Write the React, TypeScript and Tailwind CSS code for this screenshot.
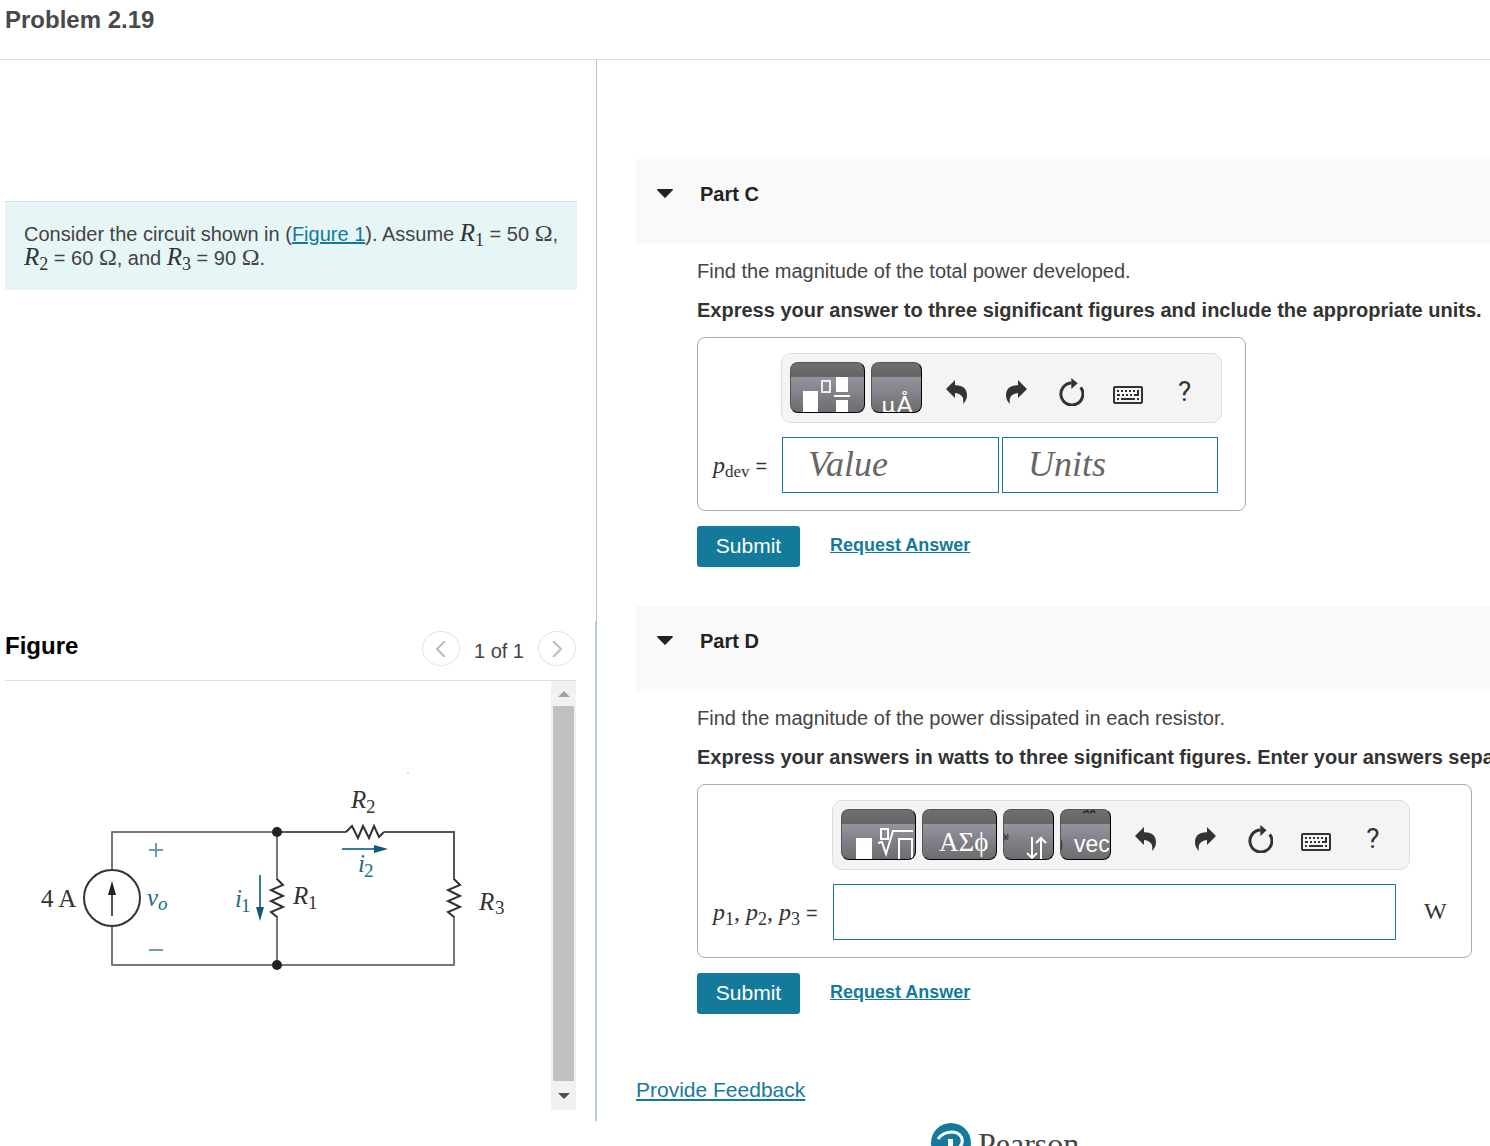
import type { ReactNode } from 'react';

const serif = "font-['Liberation_Serif',serif]";

function MathVar({ name, sub }: { name: string; sub: string }) {
  return (
    <span className={`${serif} text-[25px] leading-[0] text-[#333]`}>
      <i>{name}</i>
      <sub className="text-lg leading-[0]">{sub}</sub>
    </span>
  );
}

function Omega() {
  return <span className={`${serif} text-2xl leading-[0]`}>Ω</span>;
}

function UndoIcon({ flip = false }: { flip?: boolean }) {
  return (
    <svg width="24" height="24" viewBox="0 0 72 72" className={flip ? '-scale-x-100' : ''} fill="#333">
      <path d="M0 27L27 0V16C49 15 63 26 63 46C63 56 59 65 51 72C54 58 52 42 27 39V54Z" />
    </svg>
  );
}

function ResetIcon() {
  return (
    <svg width="25" height="28" viewBox="0 0 75 84" fill="none">
      <path d="M38 15A33 33 0 1 0 65 28" stroke="#333" strokeWidth="9" />
      <path d="M37 0L56 16L37 33Z" fill="#333" />
    </svg>
  );
}

function KeyboardIcon() {
  return (
    <svg width="30" height="24" viewBox="0 0 30 24" fill="none" stroke="#333">
      <rect x="1" y="7" width="28" height="16" rx="1" strokeWidth="2" />
      <path d="M4 11H22" strokeWidth="2" strokeDasharray="2 2" />
      <path d="M4 15H7M9 15H11M13 15H15M17 15H19M21 15H26M25 10V16" strokeWidth="2" />
      <path d="M4 19H6M8 19H22M24 19H26" strokeWidth="2" />
    </svg>
  );
}

function PaletteButton({ label, wide = false, children }: { label: string; wide?: boolean; children: ReactNode }) {
  return (
    <button
      type="button"
      aria-label={label}
      className={`h-[51px] shrink-0 overflow-hidden rounded-lg border border-t-[#555] border-l-[#555] border-r-black border-b-black bg-[linear-gradient(#707070,#646464_14px,#95939d_14px,#6d6c70)] ${
        wide ? 'w-[75px]' : 'w-[51px]'
      }`}
    >
      <svg width={wide ? 73 : 49} height="49" viewBox={wide ? '1 1 73 49' : '1 1 49 49'} fill="none">
        {children}
      </svg>
    </button>
  );
}

function Toolbar({ className, children }: { className: string; children: ReactNode }) {
  const action = 'flex h-[51px] w-[57px] items-center justify-center pt-2';
  return (
    <div className={`flex h-[70px] items-start rounded-[10px] border border-[#ddd] bg-[#f4f4f4] px-2 pt-2 ${className}`}>
      <div className="mr-2 flex gap-[6px]">{children}</div>
      <button type="button" aria-label="Undo" className={action}>
        <UndoIcon />
      </button>
      <button type="button" aria-label="Redo" className={action}>
        <UndoIcon flip />
      </button>
      <button type="button" aria-label="Reset" className={action}>
        <ResetIcon />
      </button>
      <button type="button" aria-label="Keyboard shortcuts" className={action}>
        <KeyboardIcon />
      </button>
      <button type="button" aria-label="Help" className={`${action} font-[Roboto,sans-serif] text-[28px] text-[#333]`}>
        ?
      </button>
    </div>
  );
}

interface PartProps {
  title: string;
  question: string;
  instruction: string;
  children: ReactNode;
}

function Part({ title, question, instruction, children }: PartProps) {
  return (
    <section className="mb-[39px]">
      <div className="flex h-[85px] bg-[#f9f9f9] pl-[21px] pt-[23px]">
        <button type="button" className="flex h-6 items-center gap-[27px] text-xl font-bold text-[#222]">
          <svg width="16" height="10" viewBox="0 0 16 10" fill="#222">
            <path d="M1 0H15Q17 0 15 2L9 8Q8 10 7 8L1 2Q-1 0 1 0Z" />
          </svg>
          {title}
        </button>
      </div>
      <div className="pl-[61px] pt-[15px]">
        <p className="text-xl leading-6 whitespace-nowrap">{question}</p>
        <p className="mt-[15px] text-xl leading-6 font-bold whitespace-nowrap text-[#333]">{instruction}</p>
        {children}
        <div className="mt-[15px] flex items-center gap-[30px]">
          <button type="button" className="h-[41px] w-[103px] rounded-[3px] bg-[#147a9c] pb-px text-[21px] text-white">
            Submit
          </button>
          <a href="#request" className="pb-1 text-lg font-bold text-[#147a9c] underline">
            Request Answer
          </a>
        </div>
      </div>
    </section>
  );
}

function Circuit() {
  return (
    <svg viewBox="0 0 546 429" className="h-[429px] w-[546px] min-w-0" fill="none" role="img" aria-label="Circuit diagram">
      <g stroke="#777" strokeWidth="2">
        <path d="M107 189V151H272M107 245V284H449V235M272 151V199M272 235V284" strokeLinejoin="round" />
        <path d="M272 151H341M379 151H449V199" stroke="#555" />
      </g>
      <g stroke="#333" strokeWidth="2">
        <circle cx="107" cy="217" r="28" />
        <path d="M272 198L278 204L266 209L278 215L266 220L278 226L266 231L272 236" />
        <path d="M449 198L455 204L443 209L455 215L443 220L455 226L443 231L449 236" />
        <path d="M341 151L347 145L353 157L358 145L364 157L369 145L374 156L379 151" />
      </g>
      <path d="M107 235V210" stroke="#555" strokeWidth="2" />
      <path d="M107 200L111 214H103Z" fill="#222" />
      <circle cx="272" cy="151" r="5" fill="#222" />
      <circle cx="272" cy="284" r="5" fill="#222" />
      <path d="M402 92H404" stroke="#bbb" />
      <g stroke="#6b9db5" strokeWidth="2">
        <path d="M144 169H158M151 162V176M144 269H158" />
        <path d="M255 194V228M337 168H371" stroke="#3c7c9b" />
      </g>
      <path d="M255 240L251 226H259ZM383 168L369 172V164Z" fill="#0e5a7d" />
      <g fontFamily="'Liberation Serif', serif" fontSize="25" fill="#333">
        <text x="36" y="226">4 A</text>
        <g fontStyle="italic">
          <text x="346" y="127">R</text>
          <text x="288" y="223">R</text>
          <text x="474" y="229">R</text>
        </g>
        <g fontSize="19">
          <text x="361" y="132">2</text>
          <text x="303" y="228">1</text>
          <text x="490" y="233">3</text>
        </g>
      </g>
      <g fontFamily="'Liberation Serif', serif" fontSize="25" fill="#21688a">
        <g fontStyle="italic">
          <text x="142" y="225">v</text>
          <text x="153" y="229" fontSize="19">o</text>
          <text x="230" y="226">i</text>
          <text x="353" y="191">i</text>
        </g>
        <text x="236" y="231" fontSize="19">1</text>
        <text x="359" y="196" fontSize="19">2</text>
      </g>
    </svg>
  );
}

function Figure() {
  const arrow = 'flex h-[35px] w-[38px] items-center justify-center rounded-[50%] border border-[#e4e4e4]';
  return (
    <div className="h-[500px] border-r-2 border-[#b9cade] pr-[19px] pl-[5px]">
      <div className="flex h-[60px] items-start border-b border-[#ddd] pt-[10px]">
        <h2 className="mr-auto text-2xl font-bold leading-[30px] text-black">Figure</h2>
        <button type="button" aria-label="Previous figure" className={arrow}>
          <svg width="10" height="16" viewBox="0 0 10 16" fill="none" stroke="#bbb" strokeWidth="2">
            <path d="M9 0L1 8L9 16" />
          </svg>
        </button>
        <span className="px-[14px] pt-[6px] text-xl leading-7 whitespace-nowrap">1 of 1</span>
        <button type="button" aria-label="Next figure" className={arrow}>
          <svg width="10" height="16" viewBox="0 0 10 16" fill="none" stroke="#bbb" strokeWidth="2">
            <path d="M1 0L9 8L1 16" />
          </svg>
        </button>
      </div>
      <div className="flex h-[429px]">
        <div className="min-w-0 flex-1 overflow-hidden">
          <Circuit />
        </div>
        <div className="flex w-[25px] flex-col bg-[#f1f1f1]">
          <button type="button" aria-label="Scroll up" className="flex h-[25px] items-center justify-center">
            <svg width="12" height="6" viewBox="0 0 12 6" fill="#a3a3a3">
              <path d="M6 0L12 6H0Z" />
            </svg>
          </button>
          <div className="mx-[2px] flex-1 bg-[#c1c1c1]" />
          <button type="button" aria-label="Scroll down" className="flex h-[29px] items-center justify-center">
            <svg width="12" height="6" viewBox="0 0 12 6" fill="#505050">
              <path d="M6 6L12 0H0Z" />
            </svg>
          </button>
        </div>
      </div>
    </div>
  );
}

export default function App() {
  const box = 'mt-[15px] grid h-[174px] content-start gap-y-[14px] rounded-lg border border-[#aaa] pt-[15px]';
  const field = 'h-14 border border-[#147a9c] bg-white pb-[2px] px-[25px] text-4xl italic placeholder:text-[#666]';
  const label = 'col-start-1 pl-[15px] pt-3 text-2xl leading-8 whitespace-nowrap text-[#333]';
  return (
    <div className="h-screen overflow-hidden bg-white font-['Liberation_Sans',Arial,sans-serif] text-[#444]">
      <header className="h-[60px] border-b border-[#ddd] pl-[5px] pt-1">
        <h1 className="text-2xl font-bold leading-8 text-[#494949]">Problem 2.19</h1>
      </header>
      <div className="flex">
        <aside className="box-content w-2/5 shrink-0 pr-px">
          <div className="-mr-px h-[561px] border-r border-[#b3c9d6] pr-[19px] pl-[5px] pt-[141px]">
            <p className="h-[89px] border-t border-[#d3dfe0] bg-[#e6f5f6] pt-5 pl-[19px] text-xl leading-6 whitespace-nowrap">
              Consider the circuit shown in (
              <a href="#figure" className="text-[#147a9c] underline">
                Figure 1
              </a>
              ). Assume <MathVar name="R" sub="1" /> = 50 <Omega />,
              <br />
              <MathVar name="R" sub="2" /> = 60 <Omega />, and <MathVar name="R" sub="3" /> = 90 <Omega />.
            </p>
          </div>
          <div className="-mr-px">
            <Figure />
          </div>
        </aside>
        <main className="min-w-0 flex-1 pt-[99px] pl-[39px]">
          <Part
            title="Part C"
            question="Find the magnitude of the total power developed."
            instruction="Express your answer to three significant figures and include the appropriate units."
          >
            <div className={`${box} w-[549px] grid-cols-[83px_441px]`}>
              <Toolbar className="col-start-2">
                <PaletteButton label="Templates" wide>
                  <path d="M13 29H28V50H13ZM46 15H58V30H46ZM46 38H58V50H46ZM44 33H60V35H44Z" fill="white" />
                  <path d="M31 18H41V31H31ZM33 20V29H39V20Z" fill="#eee" fillRule="evenodd" />
                </PaletteButton>
                <PaletteButton label="Units">
                  <text x="10" y="51" fontFamily="Lato, sans-serif" fontSize="24" fill="white">
                    µÅ
                  </text>
                </PaletteButton>
              </Toolbar>
              <label htmlFor="pdev" className={`${serif} ${label}`}>
                <i>p</i>
                <sub className="text-[17px] leading-[0]">dev</sub>
                <span className="pl-[6px] font-['Liberation_Sans',sans-serif] text-xl leading-[0]">=</span>
              </label>
              <div className="flex gap-[3px] pl-px">
                <input id="pdev" placeholder="Value" className={`${serif} ${field} w-[217px]`} />
                <input aria-label="Units" placeholder="Units" className={`${serif} ${field} w-[216px]`} />
              </div>
            </div>
          </Part>
          <Part
            title="Part D"
            question="Find the magnitude of the power dissipated in each resistor."
            instruction="Express your answers in watts to three significant figures. Enter your answers separated by commas."
          >
            <div className={`${box} w-[775px] grid-cols-[134px_578px_1fr]`}>
              <Toolbar className="col-start-2">
                <PaletteButton label="Templates" wide>
                  <path d="M15 29H31V50H15Z" fill="white" />
                  <path d="M39 19H48V31H39ZM41 21V29H46V21ZM57 29H72V50H57ZM59 31V50H70V31Z" fill="white" fillRule="evenodd" />
                  <path d="M37 34L41 33L45 45L52 22H72" stroke="white" strokeWidth="2" />
                </PaletteButton>
                <PaletteButton label="Greek letters" wide>
                  <text x="17" y="42" fontFamily="'Liberation Serif', serif" fontSize="27" fill="white">
                    ΑΣϕ
                  </text>
                </PaletteButton>
                <PaletteButton label="Arrows">
                  <path d="M29 28V49M24 44L29 49L34 44M38 50V29M33 34L38 29L43 34" stroke="white" strokeWidth="2" />
                  <path d="M1 24V32M1 28H6M2 26L5 31M2 31L5 25" stroke="#333" />
                </PaletteButton>
                <PaletteButton label="Vectors">
                  <text x="14" y="43" fontFamily="'Liberation Sans', sans-serif" fontSize="23" fill="white">
                    vec
                  </text>
                  <path d="M23 4L28 1M26 1L29 4M30 4L33 1L35 4" stroke="#333" strokeWidth="2" />
                  <path d="M1 31Q3 36 1 41" stroke="#333" />
                </PaletteButton>
              </Toolbar>
              <label htmlFor="powers" className={`${serif} ${label}`}>
                <i>p</i>
                <sub className="text-lg leading-[0]">1</sub>, <i>p</i>
                <sub className="text-lg leading-[0]">2</sub>, <i>p</i>
                <sub className="text-lg leading-[0]">3</sub>
                <span className="pl-[6px] font-['Liberation_Sans',sans-serif] text-xl leading-[0]">=</span>
              </label>
              <div className="pl-px">
                <input id="powers" className={`${serif} ${field} w-[563px]`} />
              </div>
              <span className={`${serif} pt-[11px] pl-[14px] text-2xl leading-8 text-[#333]`}>W</span>
            </div>
          </Part>
          <div className="pt-[23px]">
            <a href="#feedback" className="text-[21px] leading-7 text-[#147a9c] underline">
              Provide Feedback
            </a>
          </div>
          <footer className="flex items-start gap-[6px] pt-[18px] pl-[294px]">
            <svg width="42" height="42" viewBox="0 0 42 42" fill="none">
              <circle cx="21" cy="21" r="20" fill="#147a9c" />
              <path d="M8 17Q13 10 22 10C35 10 36 27 23 27" stroke="white" strokeWidth="3" />
              <path d="M18 17H23V34H18Z" fill="white" />
            </svg>
            <span className={`${serif} pt-1 text-[32px] leading-9 text-[#444]`}>Pearson</span>
          </footer>
        </main>
      </div>
    </div>
  );
}
